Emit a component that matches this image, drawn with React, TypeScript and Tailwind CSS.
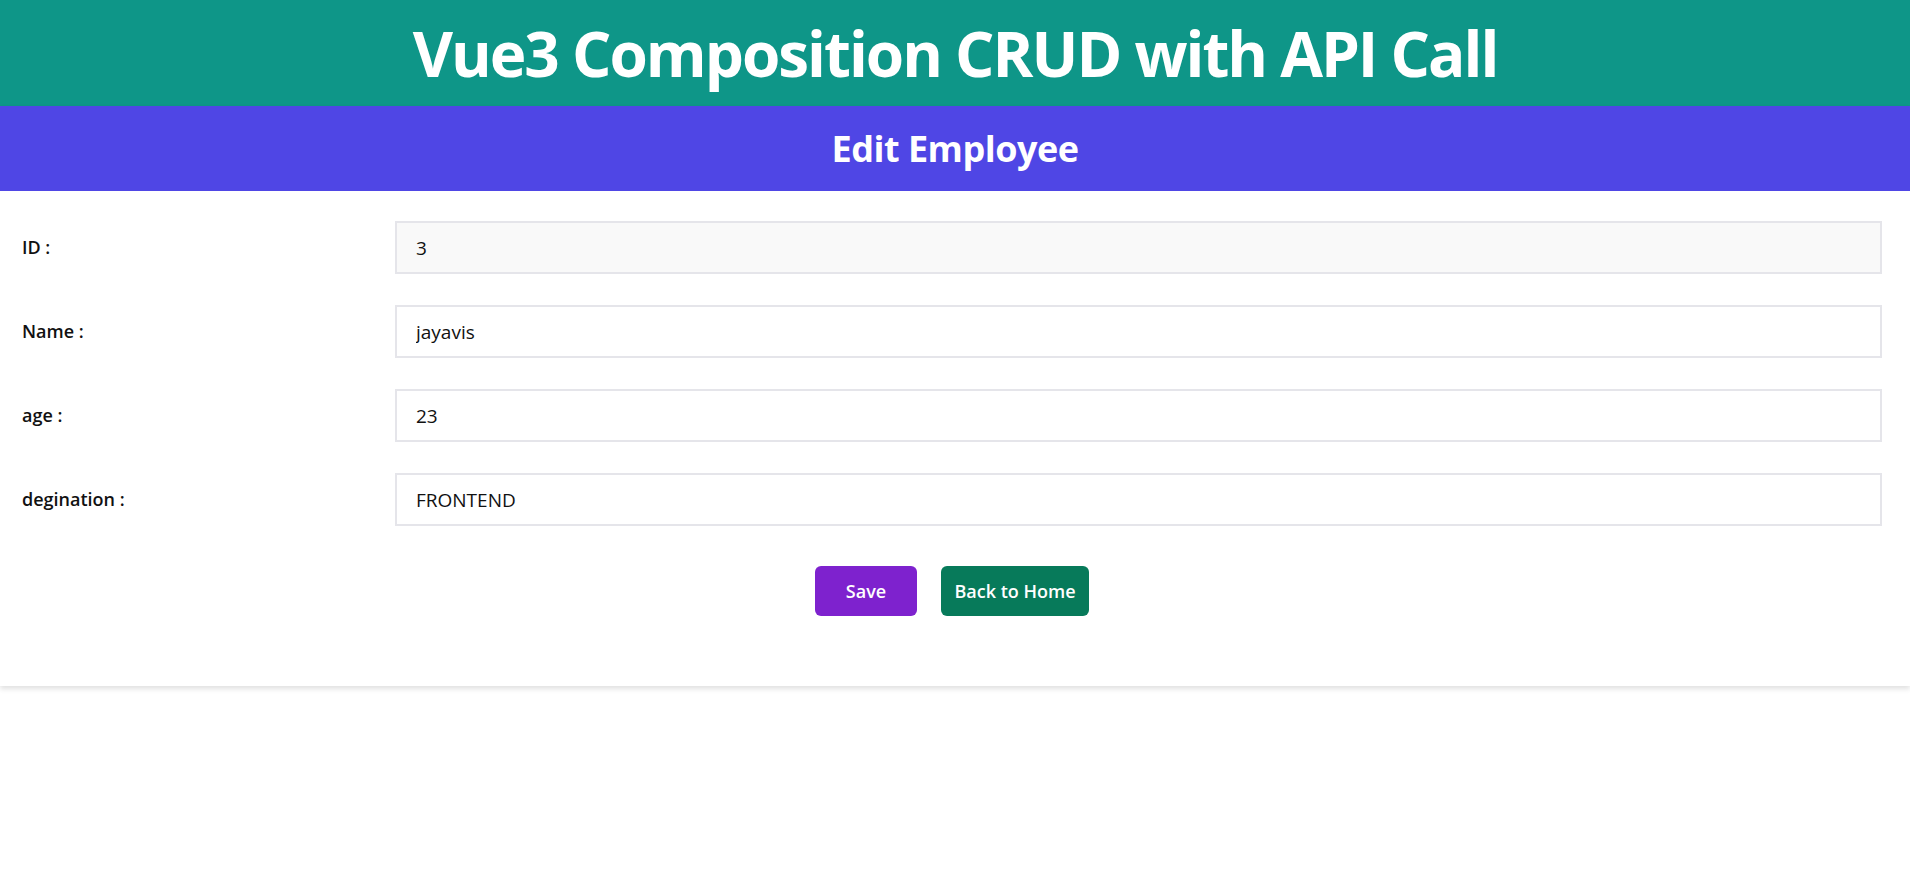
import { useState } from 'react';

const fields = [
  { key: 'id', label: 'ID :', readOnly: true },
  { key: 'name', label: 'Name :' },
  { key: 'age', label: 'age :' },
  { key: 'degination', label: 'degination :' },
] as const;

type Employee = Record<(typeof fields)[number]['key'], string>;

const App = () => {
  const [employee, setEmployee] = useState<Employee>({
    id: '3',
    name: 'jayavis',
    age: '23',
    degination: 'FRONTEND',
  });

  return (
    <div className="min-h-screen bg-white font-['Open_Sans',sans-serif] text-[#111]">
      {/* TITLE */}
      <header className="h-[106px] bg-[#0e9688] flex items-center justify-center">
        <h1 className="text-[62px] font-bold text-white leading-none tracking-[-2px]">
          Vue3 Composition CRUD with API Call
        </h1>
      </header>

      {/* CARD */}
      <div className="shadow-[0_3px_5px_rgba(0,0,0,0.12)] pb-[70px]">
        <div className="h-[85px] bg-[#4f46e5] flex items-center justify-center">
          <h2 className="text-[36px] font-bold text-white tracking-[-0.5px]">
            Edit Employee
          </h2>
        </div>

        <form className="px-[22px] pt-[30px]" onSubmit={(e) => e.preventDefault()}>
          <div className="flex flex-col gap-[31px]">
            {fields.map((f) => (
              <div key={f.key} className="flex items-center">
                <label className="w-[373px] text-[18px] font-semibold">
                  {f.label}
                </label>
                <input
                  value={employee[f.key]}
                  readOnly={'readOnly' in f}
                  onChange={(e) =>
                    setEmployee({ ...employee, [f.key]: e.target.value })
                  }
                  className={`flex-1 mr-[6px] h-[53px] border-2 border-[#e5e5ea] px-[19px] text-[19px] outline-none ${
                    'readOnly' in f ? 'bg-[#f9f9f9]' : 'bg-white'
                  }`}
                />
              </div>
            ))}
          </div>

          {/* BUTTONS */}
          <div className="flex justify-center gap-[24px] mt-[40px] mr-[6px]">
            <button className="w-[102px] h-[50px] rounded-md bg-[#7e22ce] text-white text-[18px] font-semibold">
              Save
            </button>
            <button className="w-[148px] h-[50px] rounded-md bg-[#077a5a] text-white text-[18px] font-semibold">
              Back to Home
            </button>
          </div>
        </form>
      </div>
    </div>
  );
};

export default App;
